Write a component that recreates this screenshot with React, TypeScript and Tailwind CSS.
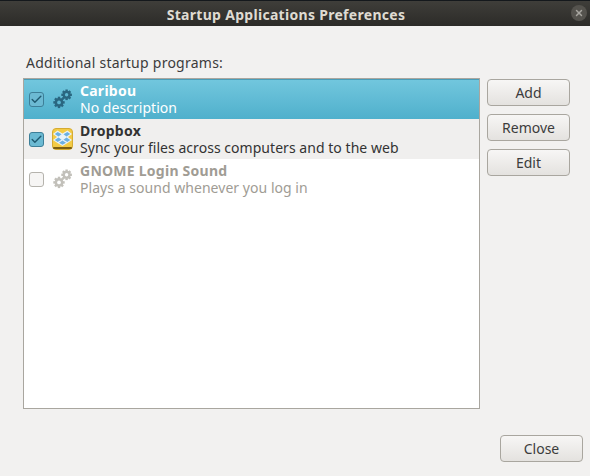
import type { ReactNode } from "react";
import { Check, X } from "lucide-react";

function Gears({ dark, hole }: { dark: string; hole: string }) {
  const gear = (cx: number, cy: number, r: number) => (
    <g fill={dark}>
      {[0, 45, 90, 135].map((a) => (
        <rect
          key={a}
          x={cx - 1.2}
          y={cy - r - 1.3}
          width={2.4}
          height={2 * r + 2.6}
          transform={`rotate(${a} ${cx} ${cy})`}
        />
      ))}
      <circle cx={cx} cy={cy} r={r} />
      <circle cx={cx} cy={cy} r={r * 0.42} fill={hole} />
    </g>
  );
  return (
    <svg width="20" height="20" viewBox="0 0 20 20">
      {gear(13.6, 5.8, 4)}
      {gear(6, 13.4, 4.4)}
    </svg>
  );
}

function DropboxIcon() {
  return (
    <svg width="21" height="22" viewBox="0 0 21 22">
      <rect x="0.5" y="0.5" width="20" height="21" rx="3.5" fill="#f3cb45" stroke="#d5ab32" />
      <rect x="1" y="19" width="19" height="2" rx="1" fill="#7a5e12" />
      <path d="M5.5 2.500 10.500 5.500 15.500 2.500 20 6 16 9 20 12 15.500 15 10.500 18 5.500 15 1 12 5 9 1 6z" fill="#e9f2f8" />
      <g fill="#6bb0e2">
        <path d="M5.700 4 9.500 6.300 6.500 8.500 2.800 6.100z" />
        <path d="M15.300 4 11.500 6.300 14.500 8.500 18.200 6.100z" />
        <path d="M6.500 9.500 9.500 11.700 5.700 14 2.800 11.900z" />
        <path d="M14.500 9.500 11.500 11.700 15.300 14 18.200 11.900z" />
        <path d="M10.500 12.600 14 14.800 10.500 16.800 7 14.800z" />
      </g>
    </svg>
  );
}

function Checkbox({ checked, disabled }: { checked: boolean; disabled?: boolean }) {
  return (
    <div
      className={`flex h-[15px] w-[15px] shrink-0 items-center justify-center rounded-[3px] border ${
        disabled
          ? "border-[#b5b3ad] bg-[#f6f5f4]"
          : "border-[#3d7f98] bg-[#6cbad3]"
      }`}
    >
      {checked && <Check size={13} strokeWidth={2.6} className="text-[#1f5a70]" />}
    </div>
  );
}

function Row(props: {
  name: string;
  desc: string;
  icon: ReactNode;
  checked: boolean;
  disabled?: boolean;
  className: string;
  textColor: string;
}) {
  return (
    <div className={`flex h-10 items-center pl-[5px] ${props.className}`}>
      <Checkbox checked={props.checked} disabled={props.disabled} />
      <div className="ml-2 flex w-[21px] shrink-0 justify-center">{props.icon}</div>
      <div className={`ml-[7px] text-[14px] leading-[17px] ${props.textColor}`}>
        <div className="font-bold tracking-[0.25px]">{props.name}</div>
        <div className="tracking-[0.04px]">{props.desc}</div>
      </div>
    </div>
  );
}

function Button({ children }: { children: string }) {
  return (
    <button className="h-[27px] w-[83px] shrink-0 rounded-[4px] border border-[#a9a69f] bg-gradient-to-b from-[#f7f6f5] to-[#e4e2df] text-[14px] leading-none text-[#3c3c3c]">
      {children}
    </button>
  );
}

export default function App() {
  return (
    <div className="flex h-[476px] w-[590px] flex-col bg-[#f2f1f0] font-['Noto_Sans',sans-serif]">
      <div className="relative flex h-[26px] items-center justify-center border-t border-[#14181c] bg-gradient-to-b from-[#3f3e3a] to-[#2c2b28] pr-[18px] pt-[2px] text-[14px] font-bold tracking-[0.3px] text-[#dfdbd2]">
        Startup Applications Preferences
        <div className="absolute right-[3px] top-[4px] flex h-[16px] w-[16px] items-center justify-center rounded-full bg-[#55534e]">
          <X size={10} strokeWidth={3.5} className="text-[#a8a6a0]" />
        </div>
      </div>

      <div className="flex flex-1 flex-col pb-[14px] pl-[23px] pr-[20px] pt-[27px]">
        <div className="ml-[3px] text-[14px] leading-[20px] tracking-[0.25px] text-[#3c3c3c]">
          Additional startup programs:
        </div>
        <div className="mt-[5px] flex">
          <div className="h-[331px] w-[457px] shrink-0 border border-[#a9a69f] bg-white">
            <Row
              name="Caribou"
              desc="No description"
              icon={<Gears dark="#2a6780" hole="#5fb8d2" />}
              checked
              className="bg-gradient-to-b from-[#72c7de] to-[#4fb0cc] shadow-[inset_0_1px_0_#4a9db8]"
              textColor="text-white"
            />
            <Row
              name="Dropbox"
              desc="Sync your files across computers and to the web"
              icon={<DropboxIcon />}
              checked
              className="bg-[#f0efee]"
              textColor="text-[#333333]"
            />
            <Row
              name="GNOME Login Sound"
              desc="Plays a sound whenever you log in"
              icon={<Gears dark="#c2c0ba" hole="#ffffff" />}
              checked={false}
              disabled
              className="bg-white"
              textColor="text-[#a09c94]"
            />
          </div>
          <div className="ml-[7px] flex flex-col gap-2 pt-[1px]">
            <Button>Add</Button>
            <Button>Remove</Button>
            <Button>Edit</Button>
          </div>
        </div>
        <div className="mr-[-13px] mt-auto flex justify-end">
          <Button>Close</Button>
        </div>
      </div>
    </div>
  );
}
